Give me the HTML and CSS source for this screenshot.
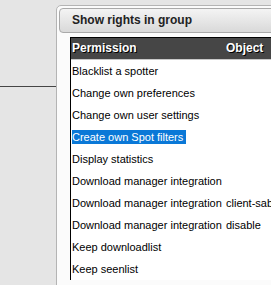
FILE: index.html
```html
<!DOCTYPE html>
<html>
<head>
<meta charset="utf-8">
<link rel="stylesheet" href="styles.css">
</head>
<body>
<div class="page">
  <div class="side"><div class="side-top"></div></div>
  <div class="dialog">
    <div class="titlebar">Show rights in group</div>
    <div class="content">
      <div class="grid">
        <div class="head">
          <div class="c1">Permission</div>
          <div class="c2">Object</div>
        </div>
        <div class="row"><div class="c1">Blacklist a spotter</div><div class="c2"></div></div>
        <div class="row"><div class="c1">Change own preferences</div><div class="c2"></div></div>
        <div class="row"><div class="c1">Change own user settings</div><div class="c2"></div></div>
        <div class="row"><div class="c1"><span class="sel">Create own Spot filters&nbsp;</span></div><div class="c2"></div></div>
        <div class="row"><div class="c1">Display statistics</div><div class="c2"></div></div>
        <div class="row"><div class="c1">Download manager integration</div><div class="c2"></div></div>
        <div class="row"><div class="c1">Download manager integration</div><div class="c2">client-sabnzbd</div></div>
        <div class="row"><div class="c1">Download manager integration</div><div class="c2">disable</div></div>
        <div class="row"><div class="c1">Keep downloadlist</div><div class="c2"></div></div>
        <div class="row"><div class="c1">Keep seenlist</div><div class="c2"></div></div>
      </div>
    </div>
  </div>
</div>
</body>
</html>
```
FILE: styles.css
```css
html, body {
  margin: 0;
  padding: 0;
  background: #e5e5e5;
  width: 271px;
  height: 285px;
  overflow: hidden;
}
.page {
  display: flex;
  align-items: flex-start;
  font-family: "Liberation Sans", Arial, sans-serif;
}
.side {
  width: 56px;
  flex: none;
}
.side-top {
  height: 86px;
  border-bottom: 1px solid #454545;
}
.dialog {
  flex: none;
  width: 300px;
  height: 320px;
  margin-top: 5px;
  border: 1px solid #b4b4b4;
  border-radius: 5px;
  background: #fbfbfb;
  padding: 2px 0 0 2px;
}
.titlebar {
  height: 23px;
  line-height: 23px;
  border: 1px solid #a9a9a9;
  border-radius: 4px;
  background: linear-gradient(#f4f4f4, #d9d9d9);
  padding-left: 12px;
  font-weight: bold;
  font-size: 12px;
  color: #222;
}
.content {
  padding: 4px 0 0 11px;
}
.grid {
  border-top: 1px solid #000;
  border-left: 1px solid #000;
  background: #fff;
  font-size: 11px;
  color: #000;
}
.head, .row {
  display: grid;
  grid-template-columns: 155px 1fr;
}
.head {
  height: 21px;
  line-height: 21px;
  background: #464646;
  border-bottom: 1px solid #c8c8c8;
  color: #fff;
  font-weight: bold;
  font-size: 12px;
  text-shadow: 1px 1px 0 #000;
}
.row {
  height: 22px;
  line-height: 22px;
}
.c1 {
  padding-left: 1px;
  white-space: nowrap;
}
.c2 {
  white-space: nowrap;
}
.sel {
  background: #0a78d7;
  color: #fff;
  padding: 1px 0;
}
```
